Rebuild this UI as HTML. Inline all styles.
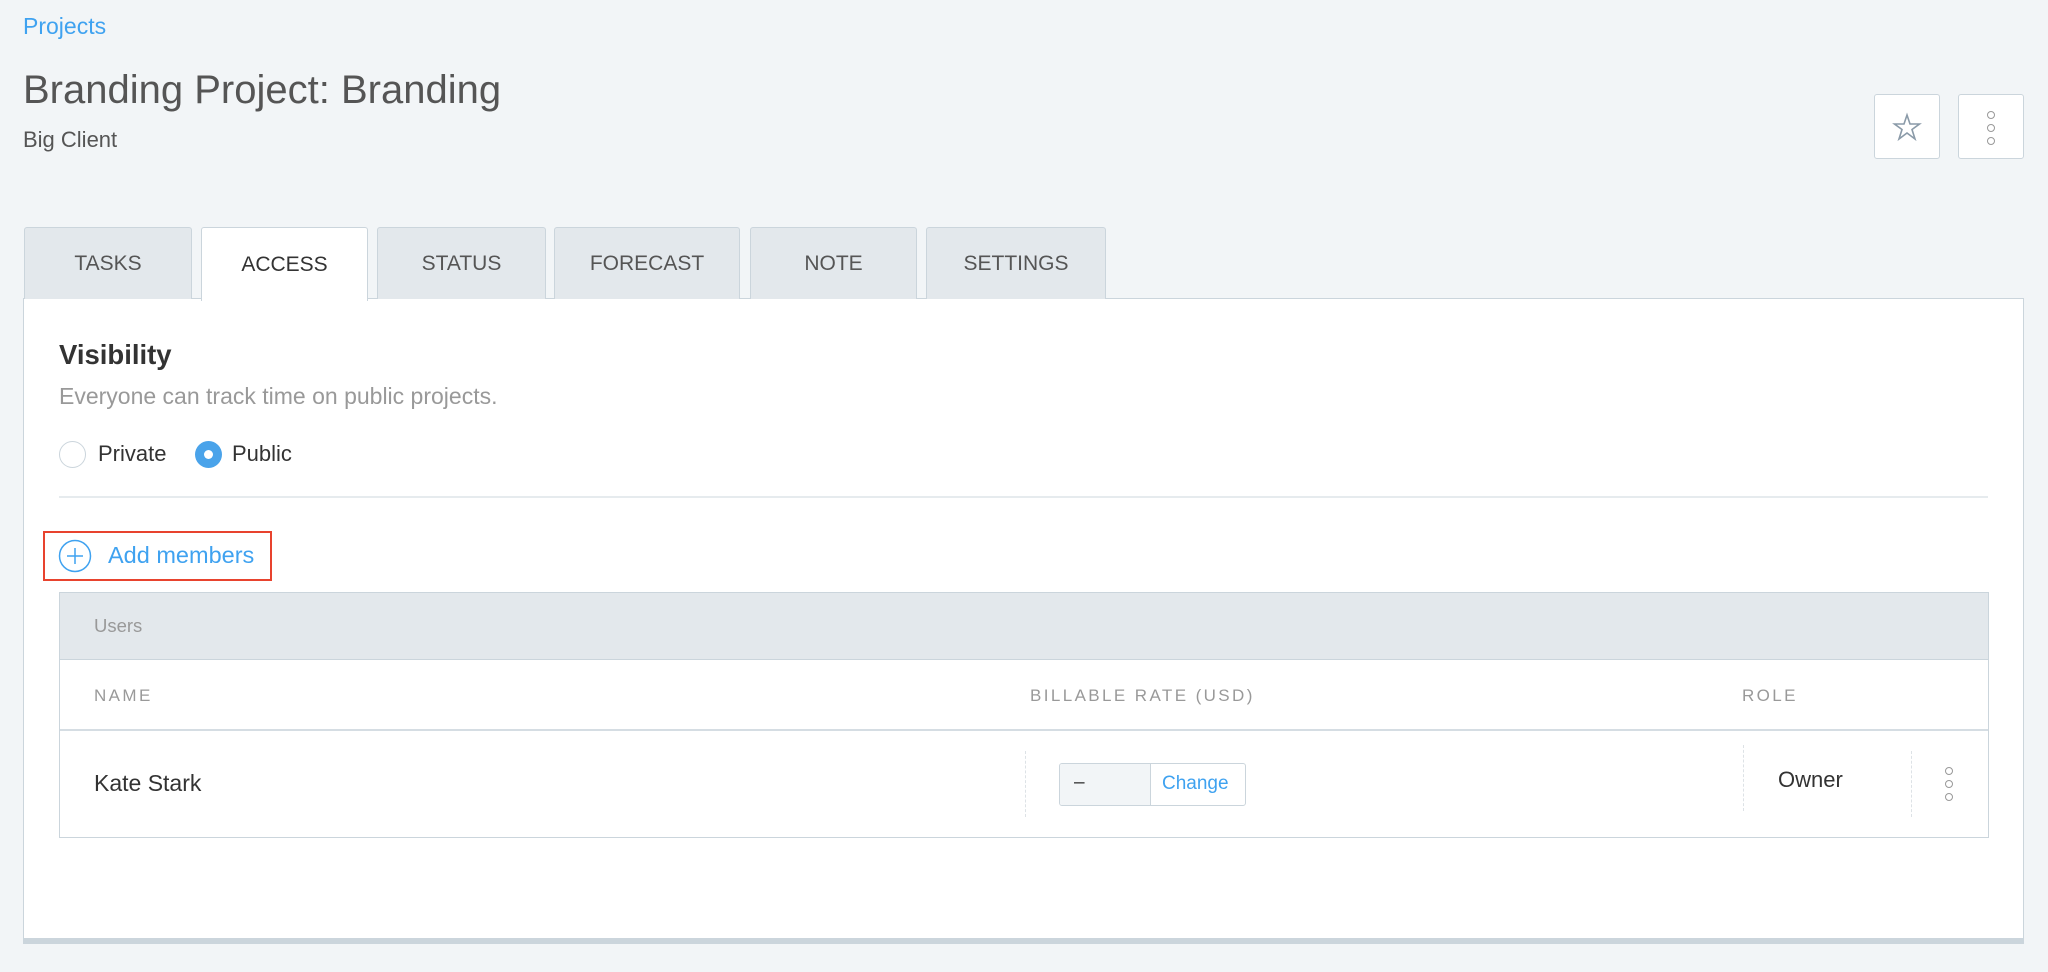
<!DOCTYPE html>
<html><head><meta charset="utf-8"><style>
*{box-sizing:border-box;margin:0;padding:0}
body{width:2048px;height:972px;background:#f2f5f7;font-family:"Liberation Sans",sans-serif;position:relative;overflow:hidden;color:#333}
.a{position:absolute;white-space:nowrap}
.tab{position:absolute;top:227px;height:72px;background:#e3e8ec;border:1px solid #cbd5dc;border-bottom:none;border-radius:3px 3px 0 0;font-size:21px;color:#555;display:flex;align-items:center;justify-content:center}
.btn{position:absolute;top:94px;width:66px;height:65px;background:#fff;border:1.5px solid #cbd5dc;border-radius:3px}
.dots{position:absolute;width:8px}
.dots i{display:block;width:8px;height:8px;border:1.5px solid #999;border-radius:50%;margin-bottom:5px}
.vd{position:absolute;border-left:1px dashed #dde2e6;width:0}
.hd{font-size:17px;letter-spacing:2.4px;color:#999}
</style></head><body>
<div class="a" style="left:23px;top:13px;font-size:23px;color:#3fa2f0">Projects</div>
<div class="a" style="left:23px;top:68px;font-size:40px;color:#555">Branding Project: Branding</div>
<div class="a" style="left:23px;top:127px;font-size:22px;color:#555">Big Client</div>
<div class="btn" style="left:1874px"><svg width="66" height="65" viewBox="0 0 66 65" style="position:absolute;left:-1px;top:-1px"><path d="M33 21 L36 30 L45.5 30 L38 35.5 L41 45 L33 39 L25 45 L28 35.5 L20.5 30 L30 30 Z" fill="none" stroke="#8a9aa8" stroke-width="1.6" stroke-linejoin="miter"/></svg></div>
<div class="btn" style="left:1958px"><div class="dots" style="left:28px;top:16px"><i></i><i></i><i></i></div></div>

<div style="position:absolute;left:23px;top:298px;width:2001px;height:646px;background:#fff;border:1.5px solid #cbd5dc;border-bottom:6px solid #cbd5dc"></div>
<div class="tab" style="left:24px;width:168px">TASKS</div>
<div class="tab" style="left:201px;width:167px;background:#fff;height:74px;color:#333">ACCESS</div>
<div class="tab" style="left:377px;width:169px">STATUS</div>
<div class="tab" style="left:554px;width:186px">FORECAST</div>
<div class="tab" style="left:750px;width:167px">NOTE</div>
<div class="tab" style="left:926px;width:180px">SETTINGS</div>

<div class="a" style="left:59px;top:339px;font-size:27.5px;font-weight:bold;color:#333">Visibility</div>
<div class="a" style="left:59px;top:383px;font-size:23px;color:#999">Everyone can track time on public projects.</div>
<div class="a" style="left:59px;top:441px;width:27px;height:27px;border:1.5px solid #cbd5dc;border-radius:50%"></div>
<div class="a" style="left:98px;top:441px;font-size:22px;color:#333">Private</div>
<div class="a" style="left:195px;top:441px;width:27px;height:27px;background:#4aa3ea;border-radius:50%"><div style="position:absolute;left:9px;top:9px;width:9px;height:9px;background:#fff;border-radius:50%"></div></div>
<div class="a" style="left:232px;top:441px;font-size:22px;color:#333">Public</div>
<div class="a" style="left:59px;top:496px;width:1929px;height:2px;background:#e6ebee"></div>

<div class="a" style="left:43px;top:531px;width:229px;height:50px;border:2px solid #e8432e"></div>
<svg class="a" style="left:58px;top:539px" width="34" height="34" viewBox="0 0 34 34"><circle cx="17" cy="17" r="15.5" fill="none" stroke="#3fa2f0" stroke-width="1.5"/><path d="M17 9V25M9 17H25" stroke="#3fa2f0" stroke-width="1.5"/></svg>
<div class="a" style="left:108px;top:542px;font-size:23.5px;color:#3fa2f0">Add members</div>

<div class="a" style="left:59px;top:592px;width:1930px;height:246px;border:1.5px solid #cbd5dc;background:#fff"></div>
<div class="a" style="left:60px;top:593px;width:1928px;height:67px;background:#e3e8ec;border-bottom:1.5px solid #cbd5dc"></div>
<div class="a" style="left:94px;top:615px;font-size:18.5px;color:#999">Users</div>
<div class="a hd" style="left:94px;top:686px">NAME</div>
<div class="a hd" style="left:1030px;top:686px">BILLABLE RATE (USD)</div>
<div class="a hd" style="left:1742px;top:686px">ROLE</div>
<div class="a" style="left:60px;top:729px;width:1928px;height:2px;background:#d5dde3"></div>
<div class="a" style="left:94px;top:770px;font-size:23px;color:#333">Kate Stark</div>
<div class="vd" style="left:1025px;top:751px;height:66px"></div>
<div class="vd" style="left:1743px;top:745px;height:66px"></div>
<div class="vd" style="left:1911px;top:751px;height:66px"></div>
<div class="a" style="left:1059px;top:763px;width:187px;height:43px;border:1.5px solid #cbd5dc;border-radius:3px;background:#fff;overflow:hidden">
<div style="position:absolute;left:0;top:0;width:91px;height:100%;background:#f2f5f7;border-right:1.5px solid #cbd5dc"></div>
<div style="position:absolute;left:14px;top:8px;font-size:19px">–</div>
<div style="position:absolute;left:102px;top:9px;font-size:19px;color:#3fa2f0">Change</div></div>
<div class="a" style="left:1778px;top:767px;font-size:22px;color:#333">Owner</div>
<div class="dots" style="left:1945px;top:767px"><i></i><i></i><i></i></div>
</body></html>
